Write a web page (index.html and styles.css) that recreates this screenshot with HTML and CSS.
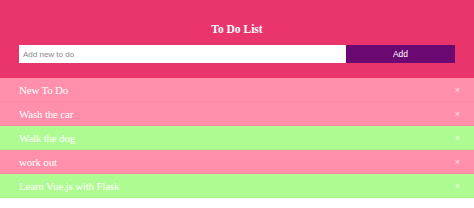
FILE: index.html
```html
<!DOCTYPE html>
<html>
<head>
<meta charset="utf-8">
<link rel="stylesheet" href="styles.css">
</head>
<body>
<div class="app">
  <header class="header">
    <h1 class="title">To Do List</h1>
    <form class="add-form">
      <input class="add-input" type="text" placeholder="Add new to do">
      <button class="add-btn" type="button">Add</button>
    </form>
  </header>
  <ul class="list">
    <li class="item todo"><span class="item-text">New To Do</span><span class="remove">×</span></li>
    <li class="item todo"><span class="item-text">Wash the car</span><span class="remove">×</span></li>
    <li class="item done"><span class="item-text">Walk the dog</span><span class="remove">×</span></li>
    <li class="item todo"><span class="item-text">work out</span><span class="remove">×</span></li>
    <li class="item done"><span class="item-text">Learn Vue.js with Flask</span><span class="remove">×</span></li>
  </ul>
</div>
</body>
</html>
```
FILE: styles.css
```css
html, body {
  margin: 0;
  padding: 0;
  background: #ffffff;
}
.app {
  font-family: "Liberation Serif", "Times New Roman", serif;
}
.header {
  background: #e9346c;
  padding: 21px 19px 15px;
}
.title {
  margin: 0 0 8px;
  font-size: 11.5px;
  line-height: 16px;
  font-weight: bold;
  color: #ffffff;
  text-align: center;
}
.add-form {
  display: flex;
  height: 18px;
  margin: 0;
}
.add-input {
  flex: 1;
  min-width: 0;
  box-sizing: border-box;
  height: 18px;
  margin: 0;
  border: none;
  padding: 0 4px;
  font-family: "Liberation Sans", Arial, sans-serif;
  font-size: 8px;
  color: #333;
  background: #ffffff;
  outline: none;
}
.add-input::placeholder {
  color: #888;
}
.add-btn {
  width: 109px;
  height: 18px;
  margin: 0;
  border: none;
  padding: 0;
  background: #6c0872;
  color: #ffffff;
  font-family: "Liberation Sans", Arial, sans-serif;
  font-size: 8.5px;
}
.list {
  list-style: none;
  margin: 0;
  padding: 0;
  box-shadow: 0 1px 2px rgba(0,0,0,0.08);
}
.item {
  display: flex;
  align-items: center;
  justify-content: space-between;
  height: 24px;
  padding: 0 14px 0 19px;
  box-sizing: border-box;
  color: #ffffff;
  font-size: 11px;
  letter-spacing: -0.2px;
  box-shadow: inset 0 -1px 0 rgba(0,0,0,0.03);
}
.todo {
  background: #ff8fab;
}
.done {
  background: #aefb91;
}
.remove {
  font-family: "Liberation Sans", Arial, sans-serif;
  font-size: 9px;
  letter-spacing: 0;
  color: rgba(255,255,255,0.75);
}
```
